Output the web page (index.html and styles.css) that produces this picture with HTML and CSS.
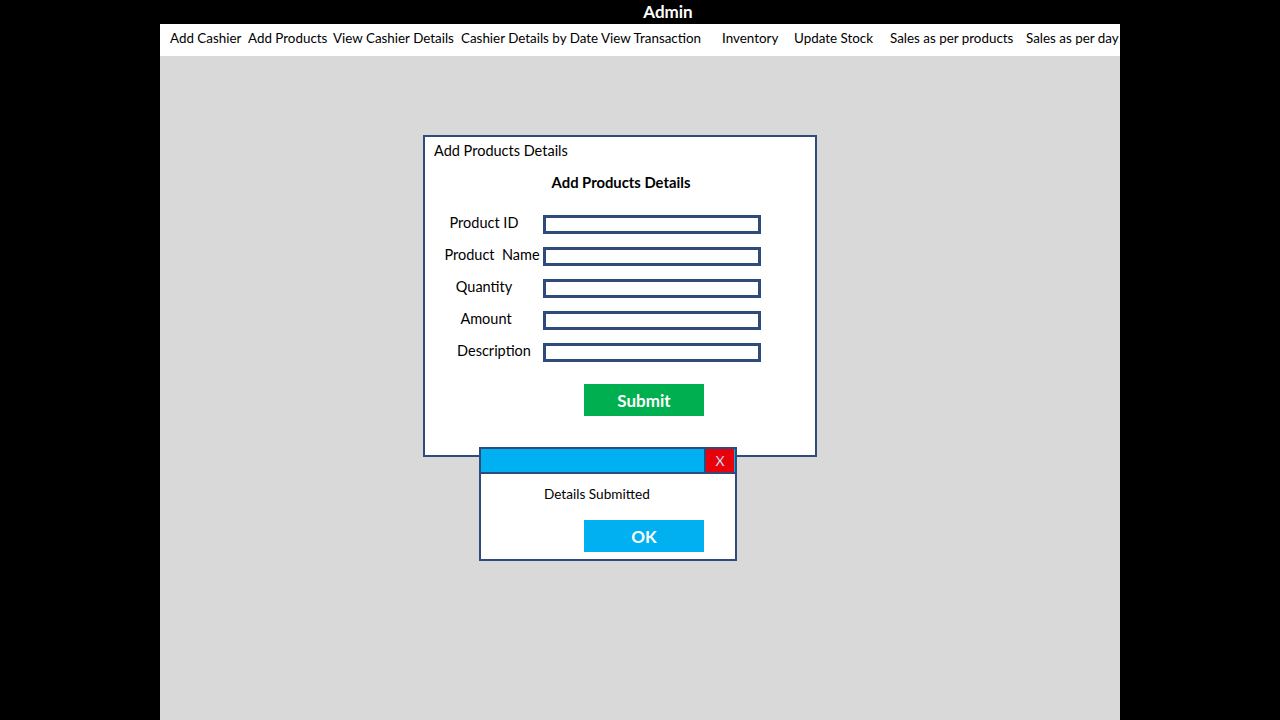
FILE: index.html
```html
<!DOCTYPE html>
<html>
<head>
<meta charset="utf-8">
<link rel="stylesheet" href="styles.css">
</head>
<body>
<div class="panel">
  <header class="title">Admin</header>
  <nav class="nav">
    <span>Add Cashier</span>
    <span>Add Products</span>
    <span>View Cashier Details</span>
    <span>Cashier Details by Date</span>
    <span>View Transaction</span>
    <span>Inventory</span>
    <span>Update Stock</span>
    <span>Sales as per products</span>
    <span>Sales as per day</span>
  </nav>
  <main class="stage">
    <section class="form-box">
      <div class="box-title">Add Products Details</div>
      <h1 class="heading">Add Products Details</h1>
      <div class="rows">
        <div class="row"><label class="lbl">Product ID</label><div class="field"></div></div>
        <div class="row"><label class="lbl lbl-name">Product&nbsp; Name</label><div class="field"></div></div>
        <div class="row"><label class="lbl">Quantity</label><div class="field"></div></div>
        <div class="row"><label class="lbl lbl-amount">Amount</label><div class="field"></div></div>
        <div class="row"><label class="lbl lbl-desc">Description</label><div class="field"></div></div>
      </div>
      <button class="btn btn-submit">Submit</button>

      <div class="dialog">
        <div class="dialog-bar"><span class="close">X</span></div>
        <div class="dialog-msg">Details Submitted</div>
        <button class="btn btn-ok">OK</button>
      </div>
    </section>
  </main>
</div>
</body>
</html>
```

FILE: styles.css
```css
html, body {
  margin: 0;
  padding: 0;
  background: #000;
  height: 100%;
  overflow: hidden;
}
body {
  font-family: Lato, "Liberation Sans", sans-serif;
  color: #000;
}
.panel {
  width: 960px;
  height: 720px;
  margin: 0 auto;
  display: flex;
  flex-direction: column;
}
.title {
  height: 24px;
  line-height: 24px;
  color: #fff;
  font-weight: bold;
  font-size: 17px;
  text-align: center;
  padding-left: 56px;
}
.nav {
  height: 32px;
  background: #fff;
  display: grid;
  grid-template-columns: 78px 85px 128px 140px 121px 72px 96px 136px 1fr;
  padding-left: 10px;
  align-items: center;
  font-size: 13.4px;
  white-space: nowrap;
  overflow: hidden;
  padding-bottom: 4px;
  box-sizing: border-box;
}
.stage {
  flex: 1;
  background: #d9d9d9;
  padding-top: 79px;
  padding-left: 263px;
}
.form-box {
  position: relative;
  width: 390px;
  height: 318px;
  background: #fff;
  border: 2px solid #2f4b7c;
}
.box-title {
  font-size: 14.5px;
  line-height: 20px;
  padding: 4px 0 0 9px;
}
.heading {
  margin: 11px 0 0 0;
  font-size: 14.8px;
  line-height: 20px;
  font-weight: bold;
  text-align: center;
  padding-left: 2px;
}
.rows {
  margin-top: 23px;
  display: flex;
  flex-direction: column;
  gap: 13px;
}
.row {
  display: flex;
  align-items: center;
  height: 19px;
}
.lbl {
  width: 118px;
  text-align: center;
  font-size: 14.5px;
  line-height: 18px;
  margin-top: -4px;
  white-space: nowrap;
}
.lbl-name { padding-left: 16px; width: 102px; }
.lbl-amount { padding-left: 4px; width: 114px; }
.lbl-desc { padding-left: 20px; width: 98px; }
.field {
  width: 218px;
  height: 19px;
  box-sizing: border-box;
  border: 3px solid #2f4b7c;
  background: #fff;
}
.btn {
  display: block;
  border: none;
  width: 120px;
  height: 32px;
  color: #fff;
  font-family: Lato, "Liberation Sans", sans-serif;
  font-weight: bold;
  font-size: 17px;
  padding: 0;
}
.btn-submit {
  margin: 22px 0 0 159px;
  background: #00b050;
}
.dialog {
  position: absolute;
  left: 54px;
  top: 310px;
  width: 254px;
  height: 110px;
  background: #fff;
  border: 2px solid #2f4b7c;
}
.dialog-bar {
  height: 23px;
  background: #00b0f0;
  border-bottom: 2px solid #2f4b7c;
  display: flex;
  justify-content: flex-end;
}
.close {
  width: 28px;
  background: #e8000b;
  border-left: 2px solid #2f4b7c;
  color: #c6d9f1;
  font-size: 14px;
  line-height: 23px;
  text-align: center;
  margin-right: 1px;
}
.dialog-msg {
  font-size: 13.6px;
  line-height: 16px;
  margin: 12px 0 0 63px;
}
.btn-ok {
  margin: 18px 0 0 103px;
  background: #00b0f0;
}
```
